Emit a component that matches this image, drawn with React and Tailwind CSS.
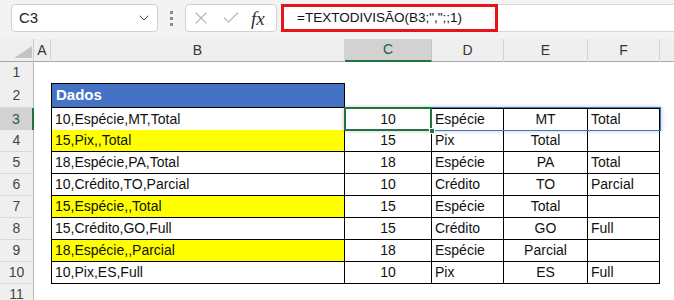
import React from 'react';
import { ChevronDown, X, Check } from 'lucide-react';

// Column widths: row header, A, B, C, D, E, F, G
const cols = 'grid grid-cols-[34px_17px_294px_87px_72px_84px_72px_1fr]';

const rows = [
  { n: 3, b: '10,Espécie,MT,Total', c: '10', d: 'Espécie', e: 'MT', f: 'Total' },
  { n: 4, b: '15,Pix,,Total', c: '15', d: 'Pix', e: 'Total', f: '', yellow: true },
  { n: 5, b: '18,Espécie,PA,Total', c: '18', d: 'Espécie', e: 'PA', f: 'Total' },
  { n: 6, b: '10,Crédito,TO,Parcial', c: '10', d: 'Crédito', e: 'TO', f: 'Parcial' },
  { n: 7, b: '15,Espécie,,Total', c: '15', d: 'Espécie', e: 'Total', f: '', yellow: true },
  { n: 8, b: '15,Crédito,GO,Full', c: '15', d: 'Crédito', e: 'GO', f: 'Full' },
  { n: 9, b: '18,Espécie,,Parcial', c: '18', d: 'Espécie', e: 'Parcial', f: '', yellow: true },
  { n: 10, b: '10,Pix,ES,Full', c: '10', d: 'Pix', e: 'ES', f: 'Full' },
];

const RowHead = ({ n, active }) => (
  <div
    className={
      active
        ? 'flex items-center justify-center bg-[#d2d2d2] border-r-2 border-r-[#217346] border-b border-b-[#d4d4d4] text-[14px] text-[#1e5e3a]'
        : 'flex items-center justify-center bg-[#efefef] border-r border-r-[#b8b8b8] border-b border-b-[#d8d8d8] text-[14px] text-[#444]'
    }
  >
    {n}
  </div>
);

export default function App() {
  return (
    <div className="relative w-[674px] h-[300px] overflow-hidden bg-white text-[#111] font-['Liberation_Sans',Arial,sans-serif]">
      {/* Toolbar: name box + formula bar */}
      <div className="flex items-start h-[39px] pt-[4px] bg-[#f3f3f3]">
        <div className="ml-[11px] w-[147px] h-[28px] flex items-center justify-between pl-[7px] pr-[5px] bg-white border border-[#d1d1d1] rounded-[4px]">
          <span className="text-[15px] text-[#222]">C3</span>
          <ChevronDown className="w-[16px] h-[16px] text-[#444]" strokeWidth={1.5} />
        </div>
        <div className="w-[27px] h-[28px] flex flex-col items-center justify-center gap-[3px]">
          <div className="w-[3px] h-[3px] bg-[#8c8c8c]" />
          <div className="w-[3px] h-[3px] bg-[#8c8c8c]" />
          <div className="w-[3px] h-[3px] bg-[#8c8c8c]" />
        </div>
        <div className="w-[92px] h-[28px] flex items-center bg-white border border-[#d1d1d1] rounded-[4px]">
          <X className="ml-[5px] w-[20px] h-[20px] text-[#b4b4b4]" strokeWidth={1.3} />
          <Check className="ml-[10px] w-[20px] h-[20px] text-[#b4b4b4]" strokeWidth={1.3} />
          <span className="ml-[10px] text-[19px] italic text-[#333] font-['Liberation_Serif',serif] leading-none">fx</span>
        </div>
        <div className="ml-[3px] flex-1 h-[28px] flex items-center bg-white border-y border-[#d6d6d6]">
          <div className="ml-[1px] w-[217px] h-[28px] flex items-center pl-[13px] border-[3px] border-[#e8141c]">
            <span className="text-[13.5px] text-[#111] whitespace-nowrap">=TEXTODIVISÃO(B3;",";;1)</span>
          </div>
        </div>
      </div>

      {/* Column headers */}
      <div className={`${cols} h-[23px] bg-[#efefef] border-b border-[#a6a6a6] text-[14px] text-[#333]`}>
        <div className="flex items-end justify-end pr-[1px] pb-[4px] border-r border-[#c8c8c8]">
          <svg width="18" height="12" viewBox="0 0 18 12">
            <polygon points="0,12 18,12 18,0" fill="#c4c4c4" />
          </svg>
        </div>
        <div className="flex items-center justify-center border-r border-[#d4d4d4]">A</div>
        <div className="flex items-center justify-center border-r border-[#d4d4d4]">B</div>
        <div className="flex items-center justify-center bg-[#d2d2d2] border-b-2 border-b-[#217346] border-r border-r-[#c4c4c4] text-[#1e5e3a]">C</div>
        <div className="flex items-center justify-center border-r border-[#d4d4d4]">D</div>
        <div className="flex items-center justify-center border-r border-[#d4d4d4]">E</div>
        <div className="flex items-center justify-center border-r border-[#d4d4d4]">F</div>
        <div />
      </div>

      {/* Row 1 */}
      <div className={`${cols} h-[21px]`}>
        <RowHead n={1} />
      </div>

      {/* Row 2 - header cell */}
      <div className={`${cols} h-[25px]`}>
        <RowHead n={2} />
        <div />
        <div className="flex items-center px-[4px] bg-[#4472c4] border border-black text-white font-bold text-[15px]">Dados</div>
      </div>

      {/* Data rows */}
      {rows.map((r, i) => (
        <div key={r.n} className={`${cols} h-[22px] text-[14px]`}>
          <RowHead n={r.n} active={i === 0} />
          <div />
          <div className={`flex items-center px-[3px] border-x border-b border-black ${r.yellow ? 'bg-[#ffff00]' : ''}`}>{r.b}</div>
          <div className={`flex items-center justify-center border-r border-b border-black ${i === 0 ? 'border-t' : ''}`}>{r.c}</div>
          <div className={`flex items-center px-[3px] border-r border-b border-black ${i === 0 ? 'border-t' : ''}`}>{r.d}</div>
          <div className={`flex items-center justify-center border-r border-b border-black ${i === 0 ? 'border-t' : ''}`}>{r.e}</div>
          <div className={`flex items-center px-[3px] border-r border-b border-black ${i === 0 ? 'border-t' : ''}`}>{r.f}</div>
        </div>
      ))}

      {/* Row 11 */}
      <div className={`${cols} h-[22px]`}>
        <RowHead n={11} />
      </div>

      {/* Spill range outline */}
      <div className="absolute left-[344px] top-[107px] w-[317px] h-[24px] border border-[#3a78d6] shadow-[0_0_4px_rgba(0,0,0,0.25)]" />
      {/* Active cell C3 */}
      <div className="absolute left-[344px] top-[107px] w-[88px] h-[24px] border-2 border-[#217346]" />
      <div className="absolute left-[429px] top-[128px] w-[6px] h-[6px] bg-[#217346] border border-white" />
    </div>
  );
}
